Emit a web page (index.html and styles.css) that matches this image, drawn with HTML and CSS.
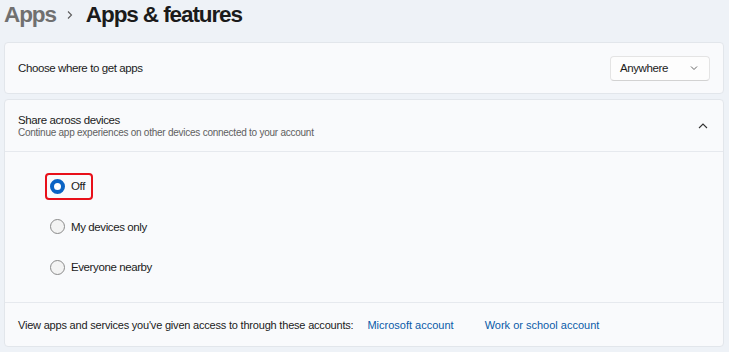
FILE: index.html
```html
<html>
<head>
	<title>Apps & features</title>
	<link rel="stylesheet" href="styles.css">
</head>
<body>
	<div class="crumbs">
		<span class="parent">Apps</span>
		<svg class="sep" width="10" height="10" viewBox="0 0 10 10"><path d="M3 1.5 L6.5 5 L3 8.5" fill="none" stroke="#5c5c5c" stroke-width="1.1"/></svg>
		<span class="current">Apps &amp; features</span>
	</div>

	<div class="card row">
		<span class="label">Choose where to get apps</span>
		<div class="select">
			<span>Anywhere</span>
			<svg width="10" height="10" viewBox="0 0 10 10"><path d="M2 3.5 L5 6.5 L8 3.5" fill="none" stroke="#666" stroke-width="1"/></svg>
		</div>
	</div>

	<div class="card share">
		<div class="row head">
			<div>
				<div class="label">Share across devices</div>
				<div class="sub">Continue app experiences on other devices connected to your account</div>
			</div>
			<svg class="up" width="12" height="12" viewBox="0 0 12 12"><path d="M2 8 L6 4 L10 8" fill="none" stroke="#333" stroke-width="1.1"/></svg>
		</div>
		<div class="options">
			<div class="opt picked"><span class="radio on"></span>Off</div>
			<div class="opt"><span class="radio"></span>My devices only</div>
			<div class="opt"><span class="radio"></span>Everyone nearby</div>
		</div>
		<div class="foot">
			<span>View apps and services you've given access to through these accounts:</span>
			<a class="link">Microsoft account</a>
			<a class="link">Work or school account</a>
		</div>
	</div>
</body>
</html>
```

FILE: styles.css
```css
* {
	box-sizing: border-box;
}

body{
	margin: 0;
	background: #eef2f7;
	font-family: "Liberation Sans", Arial, sans-serif;
	color: #1b1b1b;
}

.crumbs{
	display: flex;
	align-items: center;
	height: 30px;
	padding-left: 4px;
	margin-bottom: 12px;
	font-size: 22.5px;
	font-weight: bold;
	letter-spacing: -1.1px;
}

.crumbs .parent{
	color: #707070;
}

.crumbs .sep{
	margin: 0 11px 0 9px;
}

.card{
	margin: 0 5px 5px 4px;
	background: #f9fafc;
	border: 1px solid #e2e6eb;
	border-radius: 4px;
}

.row{
	display: flex;
	align-items: center;
	justify-content: space-between;
	height: 52px;
	padding: 0 13px 0 13px;
}

.label, .select, .opt{
	font-size: 11.5px;
	letter-spacing: -0.4px;
}

.sub{
	font-size: 10px;
	letter-spacing: -0.25px;
	color: #606060;
	margin-top: 1px;
}

.select{
	display: flex;
	align-items: center;
	justify-content: space-between;
	width: 100px;
	height: 25px;
	padding: 0 10px 0 9px;
	background: #fdfdfd;
	border: 1px solid #e4e4e4;
	border-bottom-color: #d2d2d2;
	border-radius: 4px;
}

.head{
	height: 52px;
	padding-right: 14px;
	border-bottom: 1px solid #e6e9ee;
}

.options{
	display: flex;
	flex-direction: column;
	gap: 16.5px;
	padding: 22px 0 23px 40px;
	border-bottom: 1px solid #e6e9ee;
}

.opt{
	display: flex;
	align-items: center;
	height: 24px;
	width: fit-content;
	padding: 0 6px 0 3px;
	border: 2px solid transparent;
	border-radius: 4px;
}

.opt.picked{
	border-color: #e8101a;
	height: 27px;
	margin: -1.5px 0;
}

.radio{
	width: 15px;
	height: 15px;
	border-radius: 50%;
	border: 1px solid #8a8a8a;
	background: #f3f3f3;
	margin-right: 6px;
}

.radio.on{
	border: 4px solid #0b63c4;
	background: #fff;
}

.foot{
	display: flex;
	align-items: center;
	height: 43px;
	padding-left: 13px;
	font-size: 11px;
	letter-spacing: -0.2px;
}

.link{
	color: #0a5aa8;
	margin-left: 14px;
	letter-spacing: 0;
}

.link + .link{
	margin-left: 31px;
}
```
